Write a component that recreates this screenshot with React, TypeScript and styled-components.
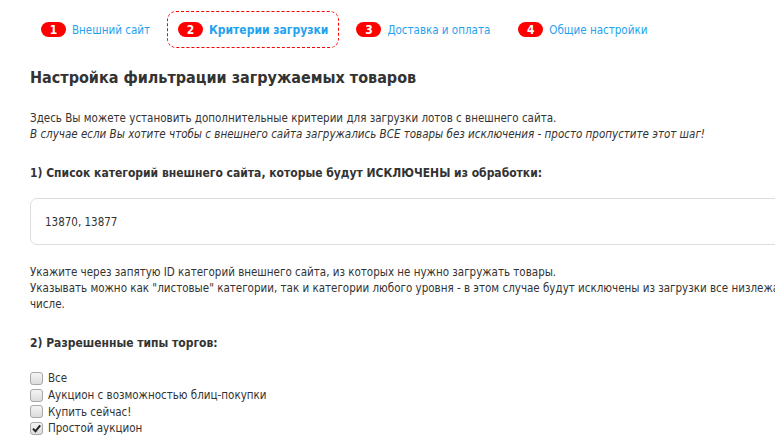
import React from 'react';
import styled, { createGlobalStyle } from 'styled-components';

const GlobalStyle = createGlobalStyle`
  html, body {
    margin: 0;
    padding: 0;
    background: #fff;
    overflow: hidden;
  }
  body {
    font-family: "DejaVu Sans Condensed", "DejaVu Sans", sans-serif;
    font-stretch: condensed;
    font-size: 11.5px;
    color: #333;
  }
`;

const Page = styled.div`
  width: 880px;
  padding: 11px 0 0 30px;
`;

const Steps = styled.div`
  display: flex;
  align-items: center;
  gap: 6px;
`;

const Step = styled.div<{ active?: boolean }>`
  display: flex;
  align-items: center;
  gap: 6px;
  height: 35px;
  padding: 0 10px;
  border: 1px dashed ${(p) => (p.active ? '#f00' : 'transparent')};
  border-radius: 9px;
  color: #1fa2f0;
  font-weight: ${(p) => (p.active ? 700 : 400)};
  font-size: ${(p) => (p.active ? '12px' : '11.5px')};
`;

const Badge = styled.span`
  display: inline-flex;
  align-items: center;
  justify-content: center;
  width: 25px;
  height: 15px;
  border-radius: 8px;
  background: #f00;
  color: #fff;
  font-weight: 700;
  font-size: 12px;
`;

const Title = styled.h1`
  margin: 20px 0 0;
  font-size: 16px;
  font-weight: 700;
  color: #333;
`;

const Text = styled.p<{ italic?: boolean }>`
  margin: 0;
  line-height: 16px;
  font-style: ${(p) => (p.italic ? 'italic' : 'normal')};
`;

const Intro = styled.div`
  margin-top: 23px;
`;

const SectionTitle = styled.h2`
  margin: 24px 0 0;
  font-size: 12px;
  font-weight: 700;
`;

const Field = styled.div`
  margin-top: 18px;
  height: 45px;
  border: 1px solid #ddd;
  border-radius: 7px;
  display: flex;
  align-items: center;
  padding-left: 14px;
`;

const Hint = styled.div`
  margin-top: 19px;
`;

const CheckList = styled.div`
  margin-top: 20px;
  display: flex;
  flex-direction: column;
`;

const CheckRow = styled.label`
  display: flex;
  align-items: center;
  gap: 5px;
  height: 16.7px;
`;

const Box = styled.span`
  width: 11px;
  height: 11px;
  border: 1px solid #a9a9a9;
  border-radius: 3px;
  background: linear-gradient(#f4f4f4, #dcdcdc);
  display: inline-flex;
  align-items: center;
  justify-content: center;
`;

const options = [
  { label: 'Все', checked: false },
  { label: 'Аукцион с возможностью блиц-покупки', checked: false },
  { label: 'Купить сейчас!', checked: false },
  { label: 'Простой аукцион', checked: true },
];

const steps = ['Внешний сайт', 'Критерии загрузки', 'Доставка и оплата', 'Общие настройки'];

export default function App() {
  return (
    <>
      <GlobalStyle />
      <Page>
        <Steps>
          {steps.map((s, i) => (
            <Step key={s} active={i === 1}>
              <Badge>{i + 1}</Badge>
              {s}
            </Step>
          ))}
        </Steps>
        <Title>Настройка фильтрации загружаемых товаров</Title>
        <Intro>
          <Text>Здесь Вы можете установить дополнительные критерии для загрузки лотов с внешнего сайта.</Text>
          <Text italic>
            В случае если Вы хотите чтобы с внешнего сайта загружались ВСЕ товары без исключения - просто пропустите этот шаг!
          </Text>
        </Intro>
        <SectionTitle>1) Список категорий внешнего сайта, которые будут ИСКЛЮЧЕНЫ из обработки:</SectionTitle>
        <Field>13870, 13877</Field>
        <Hint>
          <Text>Укажите через запятую ID категорий внешнего сайта, из которых не нужно загружать товары.</Text>
          <Text>
            Указывать можно как "листовые" категории, так и категории любого уровня - в этом случае будут исключены из загрузки все низлежащие категории в том числе.
          </Text>
        </Hint>
        <SectionTitle>2) Разрешенные типы торгов:</SectionTitle>
        <CheckList>
          {options.map((o) => (
            <CheckRow key={o.label}>
              <Box>
                {o.checked && (
                  <svg width="9" height="9" viewBox="0 0 9 9">
                    <path d="M1 4.6 L3.5 7.3 L8.2 1.4" stroke="#222" strokeWidth="2" fill="none" />
                  </svg>
                )}
              </Box>
              {o.label}
            </CheckRow>
          ))}
        </CheckList>
      </Page>
    </>
  );
}
